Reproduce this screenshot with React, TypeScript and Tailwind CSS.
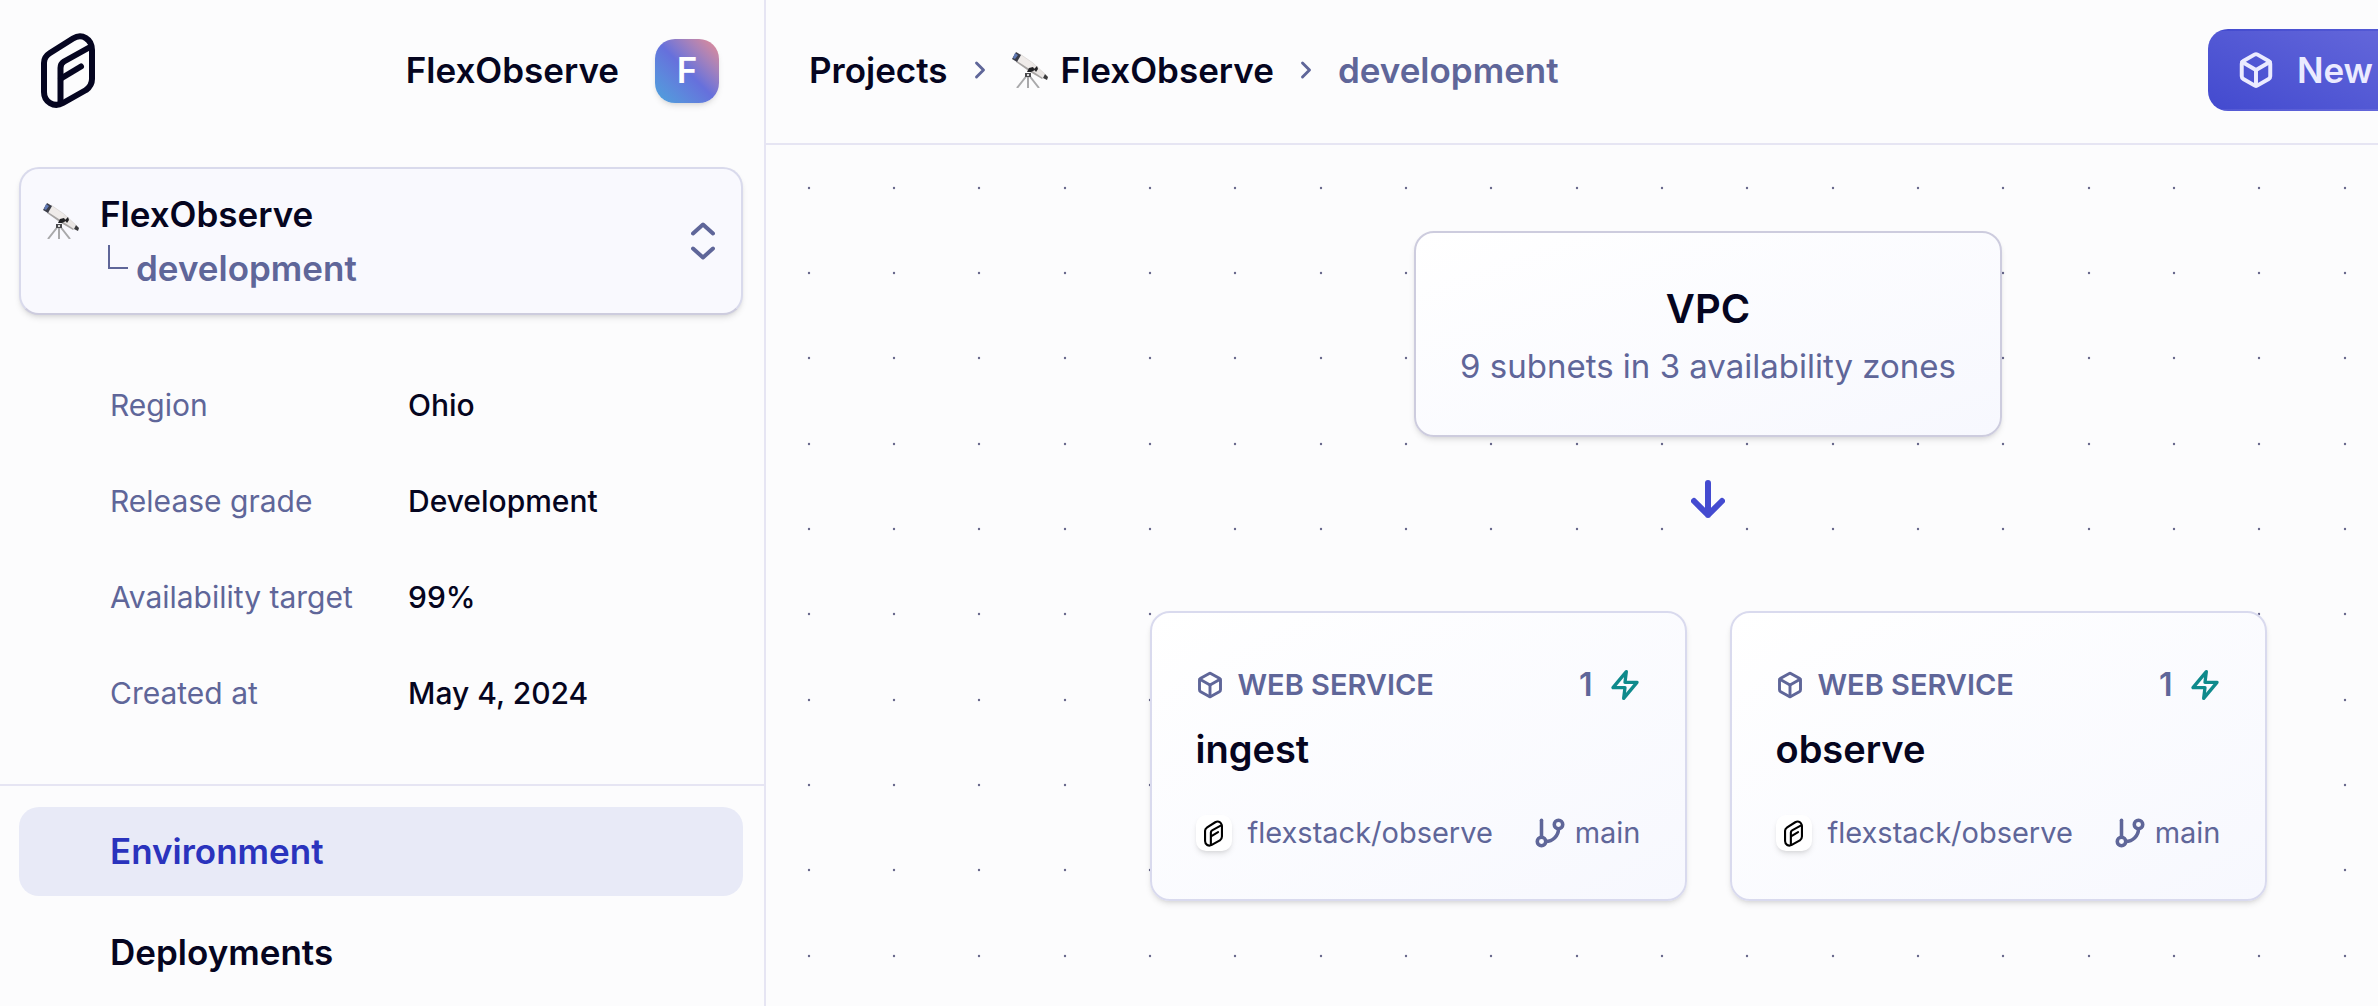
import React from "react";
import { Box, ChevronRight, GitBranch } from "lucide-react";

function Logo({ className }: { className?: string }) {
  return (
    <svg viewBox="0 0 54 75" fill="none" stroke="currentColor" strokeWidth="6" strokeLinecap="round" strokeLinejoin="round" className={className} aria-hidden="true">
      <path d="M9 20 32 5.500C41 0 51 6 51 17V46C51 51 49 54 45 57L22 70C13 75 3 69 3 59V30C3 26 5 22.500 9 20Z" />
      <path d="M19.500 70V35C19.500 32 20.500 30 23 28.500L50 13.500" />
      <path d="M20 45.500 40 33.500" />
    </svg>
  );
}

function Telescope({ className }: { className?: string }) {
  return (
    <svg viewBox="0 0 37 36" fill="none" className={className} aria-hidden="true">
      <path d="M16 22 5 36M16 21V36M16 22 27 36" stroke="#a9a9ab" strokeWidth="2" />
      <path d="M8 2 21 11 20 20 4 9Z" fill="#efebe9" />
      <path d="M21 11 33 22 31 26 18 18Z" fill="#e9e5e3" />
      <path d="M5 9 19 18 31 26 30 27 18 20 4 10Z" fill="#a7a4a3" />
      <path d="M8 2 21 11 33 22" stroke="#d2cfcd" strokeWidth="0.600" />
      <path d="M4 0 9 3 5 10 0 7Z" fill="#3b3d48" />
      <path d="M3 1 6 3 3 7 1 6Z" fill="#6079b4" />
      <path d="M33 22 36 25 35 28 31 26Z" fill="#3a3a3c" />
      <path d="M15 20 17 16 21 15 23 18 19 20ZM22 17 25 14 26 17 24 20Z" fill="#222225" />
      <path d="M13 21H19V25H13Z" fill="#4a4a4d" />
      <path d="M15 22H17V24H15Z" fill="#ddd" />
    </svg>
  );
}

const details = [
  ["Region", "Ohio"],
  ["Release grade", "Development"],
  ["Availability target", "99%"],
  ["Created at", "May 4, 2024"],
];

function Sidebar() {
  return (
    <aside className="flex w-[766px] shrink-0 flex-col border-r-2 border-[#e6e5f3]">
      <div className="flex h-[141px] items-center pr-[45px] pl-[41px]">
        <a href="#home" aria-label="Home">
          <Logo className="h-[75px] w-[54px]" />
        </a>
        <button type="button" className="ml-auto flex items-center gap-9 text-[35px] font-semibold">
          FlexObserve
          <span className="flex size-16 items-center justify-center rounded-[20px] bg-linear-to-tr from-[#4aa3dc] via-[#6670dc] to-[#e88a90] text-white shadow-md">
            F
          </span>
        </button>
      </div>

      <button
        type="button"
        className="mr-[21px] ml-[19px] mt-[26px] flex h-[148px] items-center rounded-[20px] border-2 border-[#d9daec] border-b-[#cdccde] bg-[#f9f9fe] pr-[26px] pl-[22px] text-left text-[35px] leading-[54px] font-semibold shadow-md"
      >
        <Telescope className="mt-[34px] h-9 w-[37px] self-start" />
        <span className="ml-5 flex flex-col">
          <span>FlexObserve</span>
          <span className="flex text-[#5f6699]">
            <span className="mt-1 mr-2 ml-2 h-6 w-5 border-b-2 border-l-2 border-[#5f6699]" />
            development
          </span>
        </span>
        <svg viewBox="0 0 24 38" fill="none" stroke="#5f6699" strokeWidth="4" strokeLinecap="round" strokeLinejoin="round" className="ml-auto h-[38px] w-6" aria-hidden="true">
          <path d="M2 11.500 12 2.500 22 11.500M2 26.500 12 35.500 22 26.500" />
        </svg>
      </button>

      <dl className="mt-[42px] grid grid-cols-[298px_1fr] pl-[110px] text-[30px] leading-[96px]">
        {details.map(([label, value]) => (
          <React.Fragment key={label}>
            <dt className="text-[#5f6699]">{label}</dt>
            <dd className="font-medium">{value}</dd>
          </React.Fragment>
        ))}
      </dl>

      <nav className="mt-[43px] flex flex-col gap-3 border-t-2 border-[#e6e5f3] pr-[21px] pl-[19px] pt-[21px] text-[35px] leading-[89px] font-semibold">
        <a href="#environment" aria-current="page" className="rounded-[20px] bg-[#e8eaf7] pl-[91px] text-[#2a33bd]">
          Environment
        </a>
        <a href="#deployments" className="rounded-[20px] pl-[91px]">
          Deployments
        </a>
      </nav>
    </aside>
  );
}

function Header() {
  return (
    <header className="flex h-[145px] items-center border-b-2 border-[#e6e5f3] pb-[3px] pl-[43px]">
      <nav aria-label="Breadcrumb" className="flex items-center text-[35px] font-semibold">
        <a href="#projects">Projects</a>
        <ChevronRight className="mx-[18px] size-7 text-[#5f6699]" strokeWidth={2.5} />
        <a href="#flexobserve" className="flex items-center gap-3">
          <Telescope className="h-9 w-[37px]" />
          FlexObserve
        </a>
        <ChevronRight className="mx-[18px] size-7 text-[#5f6699]" strokeWidth={2.5} />
        <span aria-current="page" className="text-[#5f6699]">development</span>
      </nav>
      <button
        type="button"
        className="ml-auto flex h-[82px] items-center gap-[22px] rounded-l-[20px] border-y-2 border-transparent bg-linear-to-tr from-[#434acf] to-[#6366da] pr-[5px] pl-[29px] text-[35px] font-semibold text-[#ebebff]"
      >
        <Box className="size-[38px]" strokeWidth={2.5} />
        New
      </button>
    </header>
  );
}

function ServiceCard({ name }: { name: string }) {
  return (
    <article className="w-[537px] rounded-[20px] border-2 border-[#d9daee] bg-linear-to-br from-white to-[#f7f8fe] px-11 pt-12 pb-[42px] text-[#5f6699] shadow-md">
      <div className="flex h-12 items-center text-[29px] font-semibold">
        <Box className="size-7" strokeWidth={2.5} />
        <span className="ml-[14px]">WEB SERVICE</span>
        <span className="ml-auto text-[32px]">1</span>
        <svg viewBox="0 0 24 24" fill="none" stroke="#0e8a8c" strokeWidth="2.500" strokeLinecap="round" strokeLinejoin="round" className="ml-4 size-8" aria-hidden="true">
          <path d="M13 2 3 14H12L11 22 21 10H12Z" />
        </svg>
      </div>
      <h3 className="mt-4 text-[38px] leading-[48px] font-semibold text-[#050520]">{name}</h3>
      <div className="mt-9 flex h-12 items-center text-[29px]">
        <span className="flex size-9 items-center justify-center rounded-[10px] bg-white text-black shadow-md">
          <Logo className="h-[27px] w-[19px]" />
        </span>
        <span className="ml-4">flexstack/observe</span>
        <GitBranch className="ml-auto size-[34px]" strokeWidth={2.5} />
        <span className="ml-2">main</span>
      </div>
    </article>
  );
}

function Canvas() {
  const stops = [43, 128, 213];
  return (
    <div className="grid min-w-[1884px] flex-1">
      <svg className="h-full w-full [grid-area:1/1]" aria-hidden="true">
        <defs>
          <pattern id="dots" width="256" height="256" patternUnits="userSpaceOnUse">
            {stops.map((y) => stops.map((x) => <circle key={`${x}-${y}`} cx={x} cy={y} r="1.200" fill="#66668a" />))}
          </pattern>
        </defs>
        <rect width="100%" height="100%" fill="url(#dots)" />
      </svg>
      <div className="flex flex-col items-center pt-[86px] [grid-area:1/1]">
        <article className="flex h-[206px] flex-col items-center justify-center rounded-[20px] border-2 border-[#cdccde] bg-linear-to-br from-white to-[#f7f8fe] px-11 pt-2 shadow-md">
          <h2 className="text-[40px] leading-[56px] font-semibold">VPC</h2>
          <p className="text-[33px] leading-[58px] text-[#5f6699]">9 subnets in 3 availability zones</p>
        </article>
        <svg viewBox="0 0 34 38" fill="none" stroke="#444bd0" strokeWidth="6" strokeLinecap="round" strokeLinejoin="round" className="mt-[43px] h-[38px] w-[34px]" aria-hidden="true">
          <path d="M17 3V35M3 21 17 35 31 21" />
        </svg>
        <div className="mt-[93px] flex gap-[43px]">
          <ServiceCard name="ingest" />
          <ServiceCard name="observe" />
        </div>
      </div>
    </div>
  );
}

export default function App() {
  return (
    <div className="flex min-h-screen bg-[#fcfcfd] font-['Inter',sans-serif] text-[#050520]">
      <Sidebar />
      <main className="flex min-w-0 flex-1 flex-col overflow-hidden">
        <Header />
        <Canvas />
      </main>
    </div>
  );
}
